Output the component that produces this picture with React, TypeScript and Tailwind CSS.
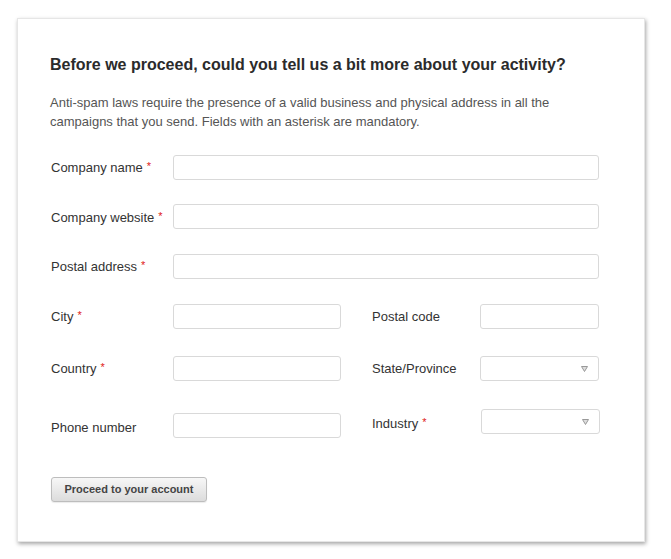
import React from 'react';

const font = { fontFamily: '"Liberation Sans", Arial, sans-serif' };

function Req() {
    return <span className="ml-[4px] text-[11px] text-[#e02020] relative top-[-2px]">*</span>;
}

function Field({ w }: { w: string }) {
    return <input type="text" className={`${w} h-[25px] rounded-[3px] border border-[#d9d9d9] bg-white outline-none`} />;
}

function Select({ w }: { w: string }) {
    return (
        <div className={`${w} h-[25px] rounded-[3px] border border-[#d9d9d9] bg-white flex items-center justify-end pr-[10px]`}>
            <svg width="7" height="6" viewBox="0 0 7 6">
                <path d="M0.5 0.5 L6.5 0.5 L3.5 5.5 Z" fill="#ddd" stroke="#999" strokeWidth="1" />
            </svg>
        </div>
    );
}

export default function App() {
    return (
        <div className="w-[671px] h-[559px] bg-white pt-[18px] pl-[17px]" style={font}>
            <div className="w-[628px] h-[524px] bg-white border border-[#e6e6e6] shadow-[1px_2px_4px_rgba(0,0,0,0.35)] pl-[32px] pt-[35px] text-[#333]">
                <h1 className="text-[16px] font-bold leading-[22px] text-[#2b2b2b]">
                    Before we proceed, could you tell us a bit more about your activity?
                </h1>
                <p className="mt-[17px] text-[13px] leading-[19px] text-[#555]">
                    Anti-spam laws require the presence of a valid business and physical address in all the<br />
                    campaigns that you send. Fields with an asterisk are mandatory.
                </p>

                <div className="mt-[24px] flex flex-col text-[13px]">
                    <div className="flex items-center h-[25px]">
                        <label className="w-[123px] pl-[1px] pt-[0px]">Company name<Req /></label>
                        <Field w="w-[426px]" />
                    </div>
                    <div className="flex items-center h-[25px] mt-[24px]">
                        <label className="w-[123px] pl-[1px] pt-[3px]">Company website<Req /></label>
                        <Field w="w-[426px]" />
                    </div>
                    <div className="flex items-center h-[25px] mt-[25px]">
                        <label className="w-[123px] pl-[1px] pt-[1px]">Postal address<Req /></label>
                        <Field w="w-[426px]" />
                    </div>
                    <div className="flex items-center h-[25px] mt-[25px]">
                        <label className="w-[123px] pl-[1px] pt-[1px]">City<Req /></label>
                        <Field w="w-[168px]" />
                        <label className="w-[108px] ml-[31px] pt-[1px]">Postal code</label>
                        <Field w="w-[119px]" />
                    </div>
                    <div className="flex items-center h-[25px] mt-[27px]">
                        <label className="w-[123px] pl-[1px] pt-[1px]">Country<Req /></label>
                        <Field w="w-[168px]" />
                        <label className="w-[108px] ml-[31px] pt-[1px]">State/Province</label>
                        <Select w="w-[119px]" />
                    </div>
                    <div className="flex items-start">
                        <div className="flex items-center h-[25px] mt-[32px]">
                            <label className="w-[123px] pl-[1px] pt-[5px]">Phone number</label>
                            <Field w="w-[168px]" />
                        </div>
                        <div className="flex items-center h-[25px] mt-[28px] ml-[31px]">
                            <label className="w-[109px] pt-[5px]">Industry<Req /></label>
                            <Select w="w-[119px]" />
                        </div>
                    </div>
                </div>

                <button className="mt-[39px] ml-[1px] w-[156px] h-[25px] rounded-[3px] border border-[#bdbdbd] bg-gradient-to-b from-[#f7f7f7] to-[#dcdcdc] text-[11px] font-bold text-[#444] shadow-[0_1px_1px_rgba(0,0,0,0.08)]">
                    Proceed to your account
                </button>
            </div>
        </div>
    );
}
